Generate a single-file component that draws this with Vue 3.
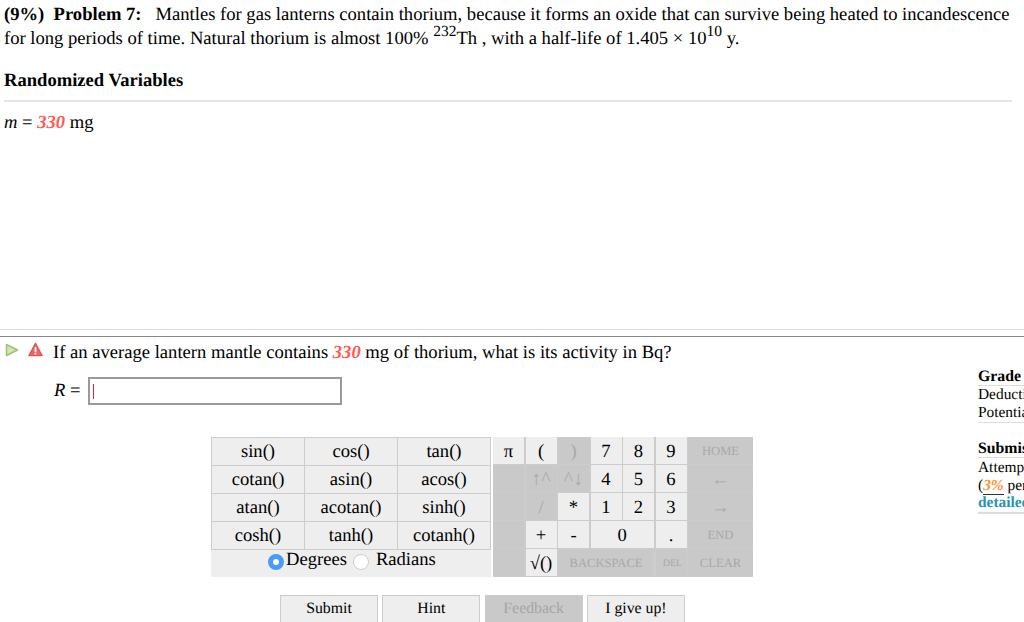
<script setup>
const fns = ['sin()','cos()','tan()','cotan()','asin()','acos()','atan()','acotan()','sinh()','cosh()','tanh()','cotanh()']
const keys = [
  ['π','on'],['(','on'],[')','off'],['7','on'],['8','on'],['9','on'],['HOME','off word'],
  ['','off'],['↑^','off big'],['^↓','off big'],['4','on'],['5','on'],['6','on'],['←','off'],
  ['','off'],['/','off'],['*','on'],['1','on'],['2','on'],['3','on'],['→','off'],
  ['','off'],['+','on'],['-','on'],['0','on wide'],['.','on'],['END','off word'],
  ['','off'],['√()','on'],['BACKSPACE','off word span3'],['DEL','off tiny'],['CLEAR','off word']
]
const actions = ['Submit','Hint','Feedback','I give up!']
</script>

<template>
  <div class="page">
    <section class="statement">
      <p class="lead">
        <b>(9%)&nbsp; Problem 7:</b>&nbsp;&nbsp; Mantles for gas lanterns contain thorium, because it forms an oxide that can survive being heated to incandescence for long periods of time. Natural thorium is almost 100% <sup>232</sup>Th , with a half-life of 1.405 × 10<sup>10</sup> y.
      </p>
      <h3>Randomized Variables</h3>
      <p class="var"><i>m</i> = <b class="num">330</b> mg</p>
    </section>

    <div class="rule-light"></div>

    <section class="question">
      <div class="q-main">
        <div class="prompt">
          <svg class="ico" width="14" height="14" viewBox="0 0 14 14">
            <path d="M1.5 1.5 L12.5 7 L1.5 12.5 Z" fill="#d3e6b4" stroke="#a3bf80" stroke-width="1.6" stroke-linejoin="round"/>
          </svg>
          <svg class="ico warn" width="15" height="15" viewBox="0 0 16 15">
            <path d="M8 1 L15 14 L1 14 Z" fill="#e8686e" stroke="#d85a60" stroke-width="1.5" stroke-linejoin="round"/>
            <rect x="7.1" y="5" width="1.8" height="5" fill="#fff"/>
            <rect x="7.1" y="11" width="1.8" height="1.8" fill="#fff"/>
          </svg>
          <span>If an average lantern mantle contains <b class="num">330</b> mg of thorium, what is its activity in Bq?</span>
        </div>
        <div class="answer">
          <span class="r"><i>R</i> =</span>
          <div class="field"><span class="caret"></span></div>
        </div>
        <div class="pad">
          <div class="fn-panel">
            <div class="fn-grid">
              <div v-for="f in fns" :key="f" class="fn">{{ f }}</div>
            </div>
            <div class="units">
              <span class="radio sel"></span><span class="u1">Degrees</span>
              <span class="radio"></span><span class="u2">Radians</span>
            </div>
          </div>
          <div class="keys">
            <div v-for="(k, i) in keys" :key="i" class="key" :class="k[1]">{{ k[0] }}</div>
          </div>
        </div>
        <div class="actions">
          <div v-for="a in actions" :key="a" class="act" :class="{ dim: a === 'Feedback' }">{{ a }}</div>
        </div>
      </div>
      <aside class="side">
        <div class="side-block">
          <div class="s-head">Grade Summary</div>
          <div>Deductions</div>
          <div class="s-last">Potential</div>
        </div>
        <div class="side-block">
          <div class="s-head second">Submissions</div>
          <div class="tight">Attempts</div>
          <div class="tight">(<b class="pct">3%</b> per</div>
          <div class="link">detailed</div>
        </div>
      </aside>
    </section>
  </div>
</template>

<style>
html, body { margin: 0; overflow: hidden; }
</style>

<style scoped>
.page {
  width: 1024px;
  height: 622px;
  overflow: hidden;
  background: #fff;
  color: #000;
  font-family: "Liberation Serif", "Times New Roman", serif;
  font-size: 18.6px;
  text-rendering: geometricPrecision;
}
.statement { padding: 3px 12px 0 4px; height: 326px; box-sizing: border-box; }
.lead { margin: 0; line-height: 24px; }
.lead sup { font-size: 15.5px; line-height: 0; vertical-align: 8px; }
h3 {
  margin: 18px 0 0;
  font-size: 18.6px;
  line-height: 24px;
  padding-bottom: 7px;
  border-bottom: 2px solid #e4e4e4;
}
.var { margin: 9px 0 0; line-height: 24px; }
.num { color: #ff5a50; font-style: italic; }
.rule-light { height: 1px; background: #ddd; margin-top: 3px; }
.question {
  margin-top: 6px;
  border-top: 1px solid #888;
  display: flex;
}
.q-main { width: 978px; flex: none; }
.prompt { display: flex; align-items: flex-start; height: 30px; padding: 6px 0 0 5px; box-sizing: border-box; line-height: 20px; }
.ico { margin-top: 0; flex: none; }
.warn { margin: -1px 10px 0 9px; }
.answer { display: flex; align-items: center; height: 28px; margin-top: 10px; padding-left: 54px; }
.r { width: 34px; }
.field { box-sizing: border-box; width: 254px; height: 28px; border: 2px solid #999; display: flex; align-items: center; padding-left: 3px; }
.caret { width: 1px; height: 15px; background: #e0204a; }
.pad { display: flex; gap: 2px; margin: 32px 0 0 211px; }
.fn-panel { width: 280px; height: 140px; background: #eee; }
.fn-grid { display: grid; grid-template-columns: 92px 92px 92px; column-gap: 1px; background: #ccc; padding: 0 1px 1px; border-top: 1px solid #ccc; }
.fn { height: 27px; margin-bottom: 1px; background: #eee; text-align: center; line-height: 27px; }
.fn:nth-last-child(-n+3) { margin-bottom: 0; }
.units { display: flex; align-items: center; height: 24px; margin-top: -1px; padding-left: 57px; }
.radio { flex: none; width: 14px; height: 14px; border-radius: 50%; background: #fff; border: 1px solid #ccc; margin: 2px 0 0 6px; }
.radio.sel { border: 5px solid #4a9bf2; width: 6px; height: 6px; margin-left: 0; }
.u1 { margin: -3px 0 0 2px; }
.u2 { margin: -3px 0 0 7px; }
.keys {
  width: 260px;
  height: 140px;
  background: #ccc;
  display: grid;
  grid-template-columns: 31px 31px 31px 31px 31px 31px 65px;
  grid-auto-rows: 27px;
  gap: 1px 1.5px;
  align-content: start;
}
.key { text-align: center; line-height: 29px; }
.on { background: #eee; color: #000; }
.off { background: #c9c9c9; color: #a8a8a8; }
.word { font-size: 12.6px; }
.tiny { font-size: 10px; padding-left: 3px; }
.big { font-size: 20px; }
.wide { grid-column: span 2; }
.span3 { grid-column: span 3; }
.actions { display: flex; gap: 4.3px; margin: 18px 0 0 280px; }
.act { width: 96px; height: 26px; border: 1px solid #ccc; border-bottom-width: 2px; background: #eee; text-align: center; line-height: 26px; font-size: 15.8px; }
.dim { background: #c9c9c9; color: #a5a5a5; }
.side { flex: none; width: 200px; padding-top: 31px; font-size: 15.4px; line-height: 18px; white-space: nowrap; }
.side-block { margin-bottom: 17px; }
.s-head { font-weight: bold; font-size: 15.8px; line-height: 17px; border-bottom: 1px solid #ddd; }
.second { margin-bottom: 1px; }
.s-last { border-bottom: 1px solid #ddd; }
.tight { line-height: 17.5px; }
.pct { color: #f59233; font-style: italic; border-bottom: 1px solid #333; }
.link { color: #2a93b5; font-weight: bold; border-bottom: 2px solid #ddd; }
</style>
